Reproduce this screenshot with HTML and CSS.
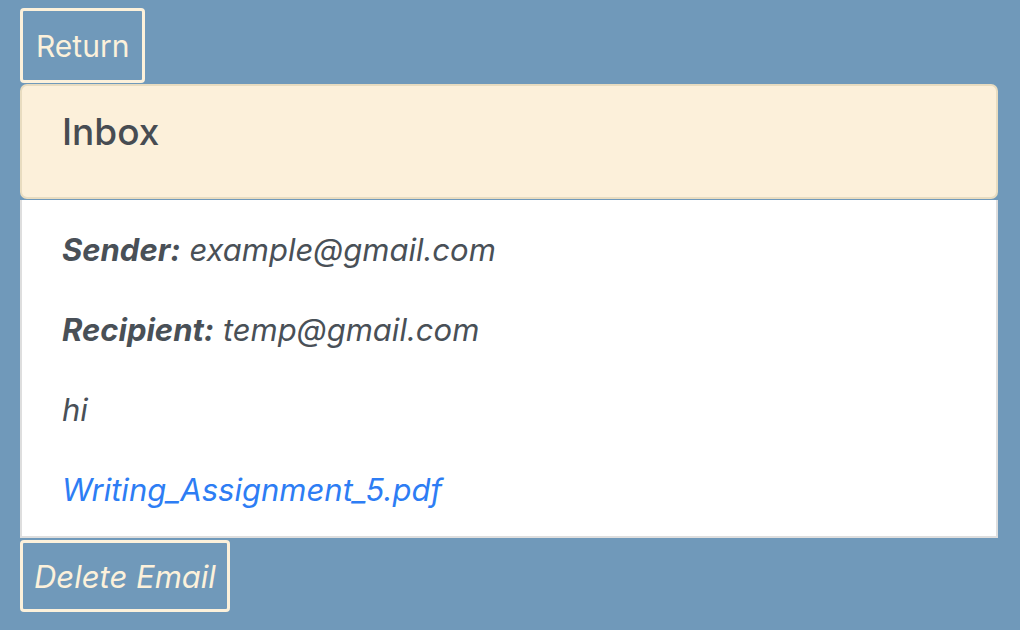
FILE: index.html
```html
<!DOCTYPE html>
<html>
<head>
<meta charset="utf-8">
<link rel="stylesheet" href="styles.css">
</head>
<body>
<div class="page">
  <button class="btn btn-return">Return</button>
  <div class="card">
    <div class="card-header"><h5 class="title">Inbox</h5></div>
    <div class="card-body">
      <p class="row"><b>Sender:</b> example@gmail.com</p>
      <p class="row"><b>Recipient:</b> temp@gmail.com</p>
      <p class="row">hi</p>
      <p class="row last"><a class="link" href="#">Writing_Assignment_5.pdf</a></p>
    </div>
  </div>
  <button class="btn btn-delete">Delete Email</button>
</div>
</body>
</html>
```
FILE: styles.css
```css
html, body {
  margin: 0;
  padding: 0;
  background: #7099ba;
  font-family: Inter, "Noto Sans", sans-serif;
  color: #495057;
}
.page {
  padding: 8px 22px 0 20px;
  display: flex;
  flex-direction: column;
  align-items: flex-start;
}
.btn {
  background: transparent;
  border: 3px solid #fcf1db;
  border-radius: 4px;
  color: #fcf1db;
  font-family: Inter, "Noto Sans", sans-serif;
  margin: 0;
  cursor: pointer;
}
.btn-return {
  font-size: 30px;
  height: 75px;
  padding: 0 13px;
}
.btn-delete {
  font-size: 31px;
  font-style: italic;
  height: 72px;
  padding: 0 11px;
  margin-top: 2px;
}
.card {
  align-self: stretch;
  margin-top: 1px;
  display: flex;
  flex-direction: column;
}
.card-header {
  background: #fcf0da;
  border: 2px solid #e8dcc0;
  border-radius: 7px;
  height: 115px;
  box-sizing: border-box;
  padding: 24px 40px 0 40px;
}
.title {
  margin: 0;
  font-size: 37px;
  line-height: 44px;
  font-weight: 500;
  color: #474c52;
}
.card-body {
  background: #fff;
  border: 2px solid #dedede;
  border-top: none;
  margin-top: 1px;
  padding: 26px 40px 22px 40px;
  height: 338px;
  box-sizing: border-box;
}
.row {
  margin: 0 0 32px 0;
  font-size: 31px;
  line-height: 48px;
  font-style: italic;
}
.row.last { margin-bottom: 0; }
.row b { font-weight: 700; }
.link {
  color: #2d7df4;
  text-decoration: none;
}
```
